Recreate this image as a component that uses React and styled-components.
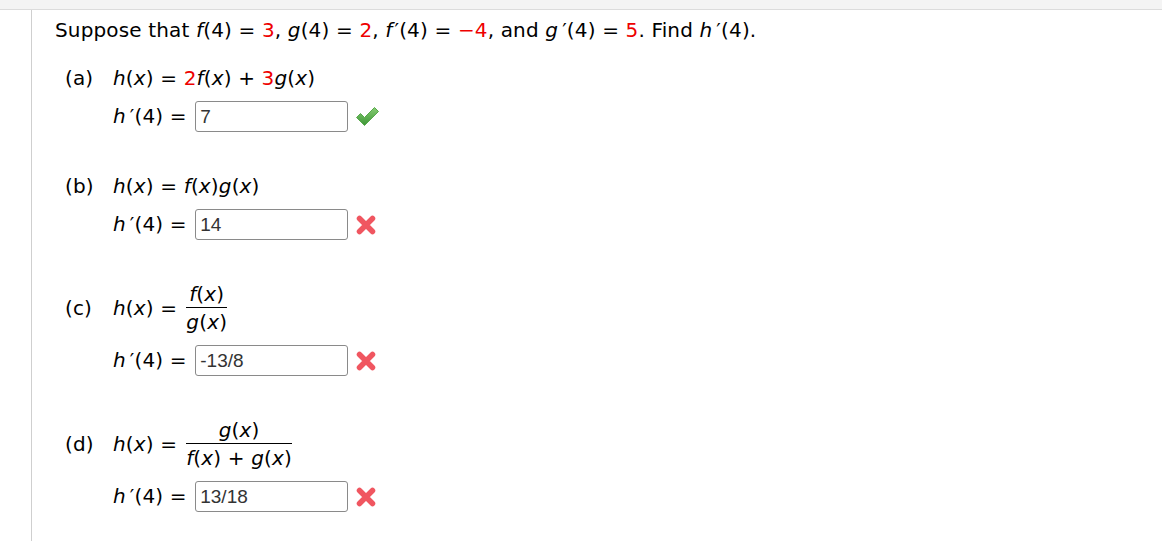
import React from 'react'
import styled, { createGlobalStyle } from "styled-components";

const Global = createGlobalStyle`
  html, body {
    margin: 0;
    padding: 0;
    background: #fff;
  }
  body {
    font-family: "DejaVu Sans", Verdana, sans-serif;
    color: #000;
  }
`;

const Page = styled.div`
  min-height: 100vh;
  display: flex;
  flex-direction: column;
`;

const TopBar = styled.div`
  height: 9px;
  background: #f4f4f4;
  border-bottom: 1px solid #dcdcdc;
`;

const Main = styled.div`
  flex: 1;
  display: flex;
`;

const Gutter = styled.div`
  width: 31px;
  border-right: 1px solid #cfcfcf;
`;

const Content = styled.div`
  padding: 8px 0 0 23px;
  font-size: 20px;
  line-height: 25px;
  letter-spacing: 0.15px;
`;

const Question = styled.div`
  white-space: nowrap;
`;

const V = styled.i`
  font-style: italic;
`;

const Prime = styled.span`
  margin-left: ${p => p.$gap || 2}px;
`;

const Red = styled.span`
  color: #ee0000;
`;

const Part = styled.div`
  margin-top: ${p => p.$first ? '23px' : '42px'};
  padding-left: 10px;
`;

const ExprRow = styled.div`
  display: flex;
  align-items: center;
  white-space: pre;
`;

const Label = styled.span`
  width: 48px;
`;

const Frac = styled.span`
  display: inline-flex;
  flex-direction: column;
  align-items: center;
  margin-left: 9px;
`;

const Num = styled.span`
  padding: 0 3px;
  border-bottom: 1px solid #000;
  align-self: stretch;
  text-align: center;
  margin-bottom: 1px;
`;

const Den = styled.span`
  line-height: 26px;
`;

const AnswerRow = styled.div`
  display: flex;
  align-items: center;
  margin-top: 10px;
  margin-left: 48px;
  white-space: pre;
`;

const Input = styled.div`
  box-sizing: border-box;
  width: 153px;
  height: 31px;
  margin-left: 2px;
  border: 1px solid #8a8a8a;
  border-radius: 3px;
  padding: 0 4px;
  font-family: "Liberation Sans", Arial, sans-serif;
  font-size: 19px;
  line-height: 29px;
  letter-spacing: 0;
  color: #333;
`;

const Mark = styled.span`
  display: inline-flex;
  margin-left: 7px;
`;

function Check() {
  return (
    <svg width="25" height="21" viewBox="0 0 25 21">
      <defs>
        <linearGradient id="gg" x1="0" y1="0" x2="0" y2="1">
          <stop offset="0" stopColor="#86cc72" />
          <stop offset="1" stopColor="#3d9636" />
        </linearGradient>
      </defs>
      <path d="M1.5 11.5 L5.5 7.5 L9.5 11.5 L19.5 1.5 L23.5 5.5 L9.5 19.5 Z" fill="url(#gg)" stroke="#57a84b" strokeWidth="1" strokeLinejoin="round" />
    </svg>
  );
}

function Cross() {
  return (
    <svg width="22" height="22" viewBox="0 0 22 22">
      <path d="M4.5 4.5 L17.5 17.5 M17.5 4.5 L4.5 17.5" stroke="#f05660" strokeWidth="5.5" strokeLinecap="round" />
    </svg>
  );
}

function Answer({ value, ok }) {
  return (
    <AnswerRow>
      <V>h</V><Prime $gap={4}>′</Prime>{'(4) = '}
      <Input>{value}</Input>
      <Mark>{ok ? <Check /> : <Cross />}</Mark>
    </AnswerRow>
  );
}

const hx = <><V>h</V>(<V>x</V>)</>;
const fx = <><V>f</V>(<V>x</V>)</>;
const gx = <><V>g</V>(<V>x</V>)</>;

export default function App() {
  return (
    <Page>
      <Global />
      <TopBar />
      <Main>
        <Gutter />
        <Content>
          <Question>
            Suppose that <V>f</V>(4) = <Red>3</Red>, <V>g</V>(4) = <Red>2</Red>, <V>f</V><Prime>′</Prime>(4) = <Red>−4</Red>, and <V>g</V><Prime $gap={4}>′</Prime>(4) = <Red>5</Red>. Find <V>h</V><Prime $gap={4}>′</Prime>(4).
          </Question>

          <Part $first>
            <ExprRow>
              <Label>(a)</Label>{hx}{' = '}<Red>2</Red>{fx}{' + '}<Red>3</Red>{gx}
            </ExprRow>
            <Answer value="7" ok />
          </Part>

          <Part>
            <ExprRow>
              <Label>(b)</Label>{hx}{' = '}{fx}{gx}
            </ExprRow>
            <Answer value="14" />
          </Part>

          <Part>
            <ExprRow>
              <Label>(c)</Label>{hx}{' ='}
              <Frac>
                <Num>{fx}</Num>
                <Den>{gx}</Den>
              </Frac>
            </ExprRow>
            <Answer value="-13/8" />
          </Part>

          <Part>
            <ExprRow>
              <Label>(d)</Label>{hx}{' ='}
              <Frac>
                <Num>{gx}</Num>
                <Den>{fx}{' + '}{gx}</Den>
              </Frac>
            </ExprRow>
            <Answer value="13/18" />
          </Part>
        </Content>
      </Main>
    </Page>
  );
}
